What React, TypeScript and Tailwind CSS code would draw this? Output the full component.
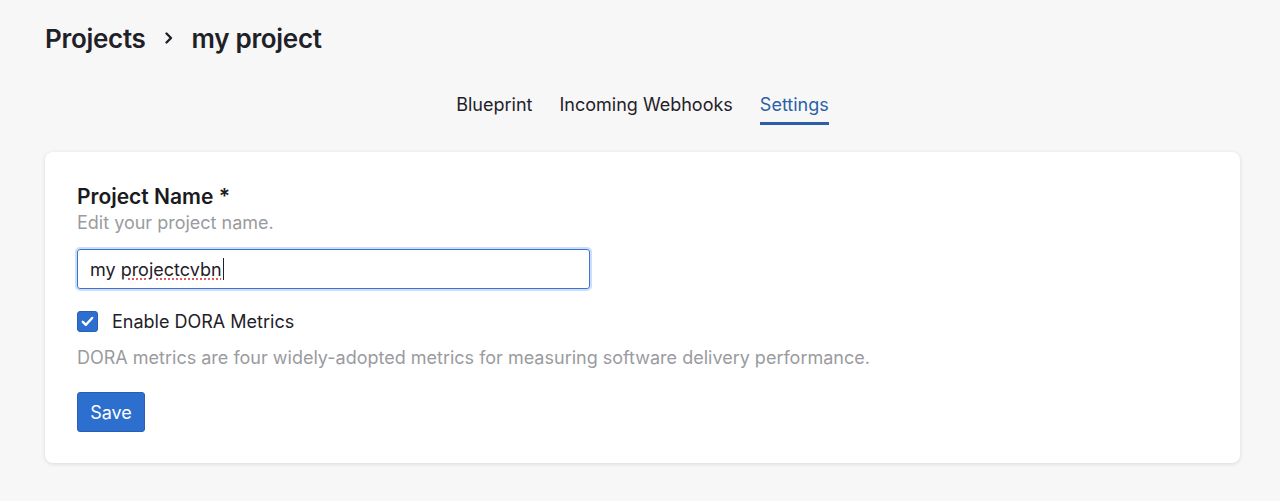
import React from "react";

export default function App() {
  return (
    <div className="min-h-[501px] w-full bg-[#f7f7f7] pl-[45px] pr-[40px] pt-[20px] pb-[38px] text-[#1f2128]" style={{ fontFamily: "Inter, 'Noto Sans', sans-serif" }}>
      <div className="flex items-center h-[36px] text-[26px] font-semibold tracking-[-0.3px]">
        <span>Projects</span>
        <svg className="mx-[17px]" width="12" height="14" viewBox="0 0 12 14" fill="none">
          <path d="M3.5 2.5 L8 7 L3.5 11.5" stroke="#1f2128" strokeWidth="2.4" strokeLinecap="round" strokeLinejoin="round" />
        </svg>
        <span>my project</span>
      </div>
      <div className="flex justify-center gap-[27px] mt-[35px] text-[18px] leading-[27px]">
        <div className="pb-[4px] border-b-[3px] border-transparent">Blueprint</div>
        <div className="pb-[4px] border-b-[3px] border-transparent">Incoming Webhooks</div>
        <div className="pb-[4px] border-b-[3px] border-[#2d5fa8] text-[#2d5fa8]">Settings</div>
      </div>
      <div className="mt-[27px] bg-white rounded-[8px] shadow-[0_1px_4px_rgba(0,0,0,0.12)] px-[32px] pt-[31px] pb-[31px]">
        <div className="text-[21px] font-semibold leading-[28px] text-[#1a1b20]">Project Name *</div>
        <div className="text-[18px] text-[#9a9ba0] leading-[24px]">Edit your project name.</div>
        <div className="mt-[14px] w-[513px] h-[40px] rounded-[3px] border border-[#3d73d1] shadow-[0_0_0_2px_rgba(110,160,235,0.35)] flex items-center px-[12px] text-[18px] text-[#1f2128]">
          <span>my</span>
          <span className="ml-[5px] underline decoration-dotted decoration-[#e05a5a] decoration-2 underline-offset-[3px]">projectcvbn</span>
          <span className="w-px h-[22px] bg-[#1f2128] ml-px"></span>
        </div>
        <div className="flex items-center h-[21px] mt-[22px]">
          <div className="w-[21px] h-[21px] shrink-0 rounded-[3px] bg-[#2d6fcf] border border-[#2a5fb5] flex items-center justify-center">
            <svg width="13" height="11" viewBox="0 0 13 11" fill="none">
              <path d="M1.8 5.8 L4.9 8.8 L11.2 2" stroke="white" strokeWidth="2.4" strokeLinecap="round" strokeLinejoin="round" />
            </svg>
          </div>
          <span className="ml-[14px] text-[18px] leading-[21px] text-[#1f2128]">Enable DORA Metrics</span>
        </div>
        <div className="mt-[14px] text-[18px] text-[#9a9ba0] leading-[24px]">DORA metrics are four widely-adopted metrics for measuring software delivery performance.</div>
        <button className="mt-[22px] h-[40px] w-[68px] rounded-[3px] bg-[#2d6fcf] border border-[#2a5fb5] text-white text-[18px] flex items-center justify-center">Save</button>
      </div>
    </div>
  );
}
